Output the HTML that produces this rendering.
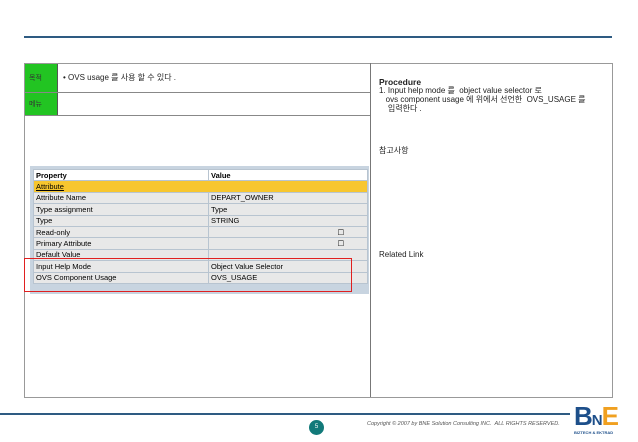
<!DOCTYPE html>
<html><head><meta charset="utf-8"><style>
body{margin:0;width:638px;height:442px;background:#fff;position:relative;overflow:hidden;font-family:"Liberation Sans","Noto Sans CJK KR",sans-serif}
.a{position:absolute}
.t{font-size:8px;color:#222}
table{border-collapse:collapse;font-size:7.5px;font-family:"Liberation Sans",sans-serif}
td{height:10.4px;padding:0 2px;border:1px solid #b8c4d0;background:#e8e8e8;white-space:nowrap}
</style></head><body>
<div class="a" style="left:24px;top:36px;width:588px;height:2px;background:#2e5b82"></div>
<div class="a" style="left:24px;top:63px;width:587px;height:333px;border:1px solid #999"></div>
<div class="a" style="left:370px;top:63px;width:1px;height:334px;background:#777"></div>
<div class="a" style="left:25px;top:64px;width:32px;height:28px;background:#22c422;border-right:1px solid #555"></div>
<div class="a" style="left:25px;top:93px;width:32px;height:22px;background:#22c422;border-right:1px solid #555"></div>
<div class="a" style="left:25px;top:92px;width:345px;height:1px;background:#888"></div>
<div class="a" style="left:25px;top:115px;width:345px;height:1px;background:#888"></div>
<div class="a t" style="left:29px;top:73px;color:#333;font-size:7px">목적</div>
<div class="a t" style="left:29px;top:99px;color:#333;font-size:7px">메뉴</div>
<div class="a t" style="left:63px;top:72px">• OVS usage 를 사용 할 수 있다 .</div>
<div class="a" style="left:30px;top:166px;width:339px;height:128px;background:#c8d4e0"></div>
<div class="a" style="left:33px;top:169px">
<table style="width:335px">
<tr><td style="width:170px;background:#fff;font-weight:bold">Property</td><td style="background:#fff;font-weight:bold">Value</td></tr>
<tr><td colspan="2" style="background:#f7c62f;text-decoration:underline">Attribute</td></tr>
<tr><td>Attribute Name</td><td>DEPART_OWNER</td></tr>
<tr><td>Type assignment</td><td>Type</td></tr>
<tr><td>Type</td><td>STRING</td></tr>
<tr><td>Read-only</td><td style="text-align:right">☐&nbsp;&nbsp;&nbsp;&nbsp;&nbsp;&nbsp;&nbsp;&nbsp;&nbsp;&nbsp;</td></tr>
<tr><td>Primary Attribute</td><td style="text-align:right">☐&nbsp;&nbsp;&nbsp;&nbsp;&nbsp;&nbsp;&nbsp;&nbsp;&nbsp;&nbsp;</td></tr>
<tr><td>Default Value</td><td></td></tr>
<tr><td>Input Help Mode</td><td>Object Value Selector</td></tr>
<tr><td>OVS Component Usage</td><td>OVS_USAGE</td></tr>
</table></div>
<div class="a" style="left:24px;top:258px;width:326px;height:32px;border:1.5px solid #e02020"></div>
<div class="a t" style="left:379px;top:77px;font-weight:bold;font-size:8.5px">Procedure</div>
<div class="a t" style="left:379px;top:86px;line-height:9px">1. Input help mode 를 &nbsp;object value selector 로<br>&nbsp;&nbsp;&nbsp;ovs component usage 에 위에서 선언한 &nbsp;OVS_USAGE 를<br>&nbsp;&nbsp;&nbsp;&nbsp;입력한다 .</div>
<div class="a t" style="left:379px;top:145px">참고사항</div>
<div class="a t" style="left:379px;top:250px">Related Link</div>
<div class="a" style="left:0;top:413px;width:570px;height:2px;background:#2e5b82"></div>
<div class="a" style="left:309px;top:420px;width:15px;height:15px;border-radius:50%;background:#127a7a;color:#fff;font-size:6px;text-align:center;line-height:15px">5</div>
<div class="a" style="left:367px;top:421px;font-size:5.5px;font-style:italic;color:#555">Copyright © 2007 by BNE Solution Consulting INC. &nbsp;ALL RIGHTS RESERVED.</div>
<div class="a" style="left:574px;top:403px;font-size:26px;font-weight:bold;line-height:26px;letter-spacing:-1px"><span style="color:#1d4f8a">B</span><span style="color:#1d4f8a;font-size:15px">N</span><span style="color:#f0a020">E</span></div>
<div class="a" style="left:574px;top:430px;font-size:4px;color:#1d4f8a;font-weight:bold">BIZTECH &amp; EKTRAD</div>
</body></html>
